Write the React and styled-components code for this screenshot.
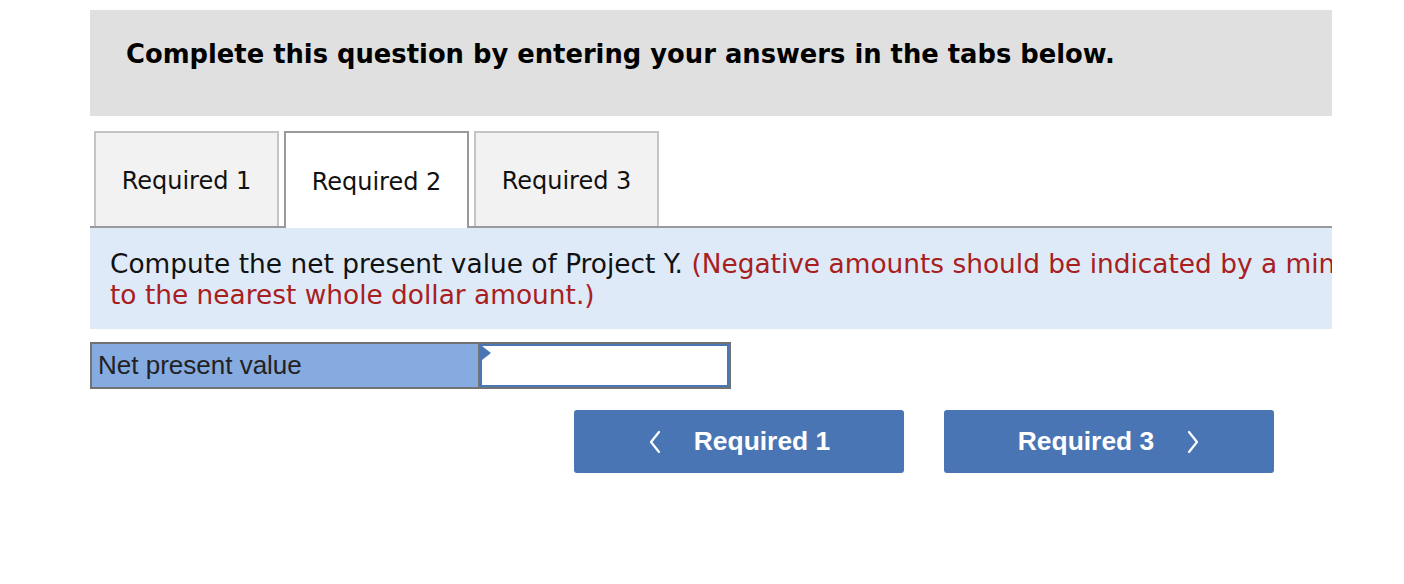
import React from 'react';
import styled, { createGlobalStyle, css } from 'styled-components';

const GlobalStyle = createGlobalStyle`
    body {
        margin: 0;
        background: #fff;
        font-family: "DejaVu Sans", Verdana, sans-serif;
    }
`;

const Page = styled.div`
    width: 1242px;
    margin: 10px 0 0 90px;
`;

const Banner = styled.div`
    height: 106px;
    box-sizing: border-box;
    padding: 29px 0 0 36px;
    background: #e0e0e0;
    font-weight: bold;
    font-size: 25.8px;
    color: #000;
    white-space: nowrap;
`;

const TabBar = styled.div`
    display: flex;
    gap: 5px;
    margin-top: 15px;
    padding-left: 4px;
    height: 95px;
    border-bottom: 2px solid #9a9a9a;
`;

const Tab = styled.div`
    width: 185px;
    box-sizing: border-box;
    display: flex;
    align-items: center;
    justify-content: center;
    padding-top: 2px;
    font-size: 24px;
    color: #111;
    border: 2px solid #c4c4c4;
    border-bottom: none;
    background: #f2f2f2;
    ${(p) => p.$active && css`
        background: #fff;
        border-color: #9a9a9a;
        height: 97px;
        position: relative;
        z-index: 1;
    `}
`;

const Instruction = styled.div`
    height: 101px;
    box-sizing: border-box;
    padding: 20px 0 0 20px;
    background: #deeaf7;
    overflow: hidden;
`;

const InstructionText = styled.p`
    margin: 0;
    width: 1620px;
    font-size: 26.4px;
    line-height: 31px;
    color: #111;
`;

const Hint = styled.span`
    color: #a8201e;
`;

const AnswerRow = styled.div`
    display: flex;
    width: 641px;
    height: 47px;
    box-sizing: border-box;
    margin-top: 13px;
    border: 2px solid #727272;
`;

const Label = styled.div`
    flex: 0 0 388px;
    display: flex;
    align-items: center;
    padding-left: 6px;
    box-sizing: border-box;
    background: #86abe0;
    border-right: 2px solid #727272;
    font-family: "Liberation Sans", Arial, sans-serif;
    font-size: 26px;
    color: #222;
    white-space: nowrap;
`;

const InputCell = styled.div`
    position: relative;
    flex: 1;
    min-width: 0;
    display: flex;
`;

const Input = styled.input`
    flex: 1;
    width: 0;
    margin: 0;
    border: 2px solid #4a76b6;
    outline: none;
    background: #fff;
    font-family: "Liberation Sans", Arial, sans-serif;
    font-size: 22px;
`;

const Marker = styled.span`
    position: absolute;
    left: 2px;
    top: 2px;
    width: 0;
    height: 0;
    border-top: 7px solid transparent;
    border-bottom: 7px solid transparent;
    border-left: 9px solid #4a76b6;
`;

const NavRow = styled.div`
    display: flex;
    gap: 40px;
    margin-top: 21px;
    padding-left: 484px;
`;

const NavButton = styled.button`
    width: 330px;
    height: 63px;
    display: flex;
    align-items: center;
    justify-content: center;
    gap: 32px;
    border: none;
    border-radius: 3px;
    background: #4a75b4;
    color: #fff;
    font-family: "Liberation Sans", Arial, sans-serif;
    font-weight: bold;
    font-size: 26.4px;
    cursor: pointer;
    padding: 0;
`;

const Chevron = ({ dir }) => (
    <svg width="14" height="24" viewBox="0 0 14 24" fill="none">
        <path
            d={dir === 'left' ? 'M11 2 L3 12 L11 22' : 'M3 2 L11 12 L3 22'}
            stroke="#fff"
            strokeWidth="2.2"
            strokeLinecap="round"
            strokeLinejoin="round"
        />
    </svg>
);

const tabs = ['Required 1', 'Required 2', 'Required 3'];

const App = () => (
    <Page>
        <GlobalStyle />
        <Banner>Complete this question by entering your answers in the tabs below.</Banner>
        <TabBar>
            {tabs.map((t, i) => (
                <Tab key={t} $active={i === 1}>{t}</Tab>
            ))}
        </TabBar>
        <Instruction>
            <InstructionText>
                Compute the net present value of Project Y.{' '}
                <Hint>
                    (Negative amounts should be indicated by a minus sign. Round your answer to the nearest whole dollar amount.)
                </Hint>
            </InstructionText>
        </Instruction>
        <AnswerRow>
            <Label>Net present value</Label>
            <InputCell>
                <Marker />
                <Input type="text" aria-label="Net present value" />
            </InputCell>
        </AnswerRow>
        <NavRow>
            <NavButton>
                <Chevron dir="left" />
                <span>Required 1</span>
            </NavButton>
            <NavButton>
                <span>Required 3</span>
                <Chevron dir="right" />
            </NavButton>
        </NavRow>
    </Page>
);

export default App;
